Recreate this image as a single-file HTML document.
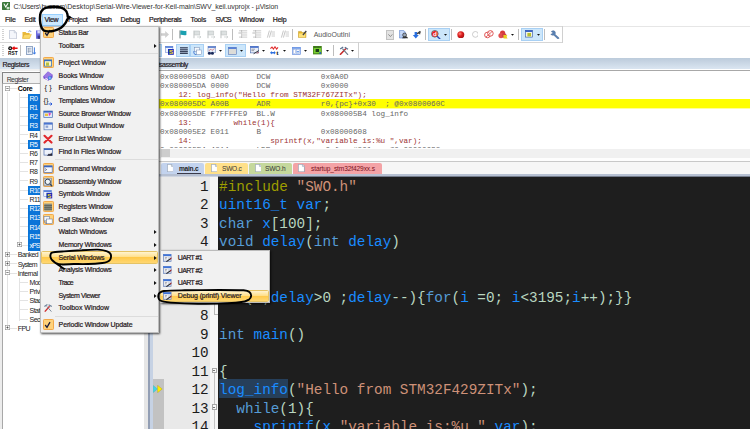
<!DOCTYPE html>
<html><head><meta charset="utf-8"><title>uVision</title>
<style>
html,body{margin:0;padding:0}
body{width:750px;height:429px;position:relative;overflow:hidden;background:#fff;font-family:'Liberation Sans',sans-serif;}
div,span,svg{position:absolute;}
span{white-space:nowrap;} span span{position:static;white-space:pre;}
</style></head><body>
<div style="left:0px;top:0px;width:750px;height:13px;background:#fff"></div>
<svg style="left:1.7px;top:2.2px" width="8.4" height="8.2" viewBox="0 0 9 10" preserveAspectRatio="none"><rect width="9" height="10" rx="1" fill="#3c7a3c"/><path d="M2 2 L4 6 L6.5 1.5" stroke="#fff" stroke-width="1.2" fill="none"/><rect x="5" y="6" width="3" height="3" fill="#cfe6cf"/></svg>
<span style="left:13.5px;top:3px;font-size:7px;line-height:7px;color:#333;letter-spacing:-0.208px;">C:\Users\</span>
<span style="left:41.4px;top:3px;font-size:7px;line-height:7px;color:#333;letter-spacing:-0.185px;">bussam</span>
<span style="left:65.2px;top:3px;font-size:7px;line-height:7px;color:#333;letter-spacing:0.070px;">\Desktop\</span>
<span style="left:95.6px;top:3px;font-size:7px;line-height:7px;color:#333;letter-spacing:-0.061px;">Serial-Wire-Viewer-for-Keil-main\SWV_keil.uvprojx - µVision</span>
<div style="left:0px;top:13px;width:750px;height:13px;background:#fff"></div>
<div style="left:42px;top:14px;width:21px;height:11.5px;background:#cce8ff;border:0.5px solid #99d1ff;box-sizing:border-box"></div>
<span style="left:5px;top:16px;font-size:7px;line-height:7px;color:#1c1418;-webkit-text-stroke:0.2px #1c1418;letter-spacing:-0.170px;">File</span>
<span style="left:24.4px;top:16px;font-size:7px;line-height:7px;color:#1c1418;-webkit-text-stroke:0.2px #1c1418;letter-spacing:-0.216px;">Edit</span>
<span style="left:44.4px;top:16px;font-size:7px;line-height:7px;color:#1c1418;-webkit-text-stroke:0.2px #1c1418;letter-spacing:-0.262px;">View</span>
<span style="left:68px;top:16px;font-size:7px;line-height:7px;color:#1c1418;-webkit-text-stroke:0.2px #1c1418;letter-spacing:-0.369px;">Project</span>
<span style="left:96.4px;top:16px;font-size:7px;line-height:7px;color:#1c1418;-webkit-text-stroke:0.2px #1c1418;letter-spacing:-0.383px;">Flash</span>
<span style="left:120.6px;top:16px;font-size:7px;line-height:7px;color:#1c1418;-webkit-text-stroke:0.2px #1c1418;letter-spacing:-0.246px;">Debug</span>
<span style="left:149px;top:16px;font-size:7px;line-height:7px;color:#1c1418;-webkit-text-stroke:0.2px #1c1418;letter-spacing:-0.255px;">Peripherals</span>
<span style="left:190.6px;top:16px;font-size:7px;line-height:7px;color:#1c1418;-webkit-text-stroke:0.2px #1c1418;letter-spacing:-0.188px;">Tools</span>
<span style="left:215.6px;top:16px;font-size:7px;line-height:7px;color:#1c1418;-webkit-text-stroke:0.2px #1c1418;letter-spacing:-1.016px;">SVCS</span>
<span style="left:239px;top:16px;font-size:7px;line-height:7px;color:#1c1418;-webkit-text-stroke:0.2px #1c1418;letter-spacing:0.017px;">Window</span>
<span style="left:272.8px;top:16px;font-size:7px;line-height:7px;color:#1c1418;-webkit-text-stroke:0.2px #1c1418;letter-spacing:-0.199px;">Help</span>
<div style="left:0px;top:26px;width:750px;height:32.4px;background:#fff"></div>
<div style="left:0px;top:26.2px;width:750px;height:0.8px;background:#e6e6e6"></div>
<div style="left:0px;top:26.2px;width:562.6px;height:0.8px;background:#dadada"></div>
<div style="left:0px;top:41.8px;width:562.6px;height:0.8px;background:#d6d6d6"></div>
<div style="left:562px;top:26.2px;width:0.8px;height:16.4px;background:#d0d0d0"></div>
<div style="left:358.2px;top:42px;width:0.8px;height:16px;background:#d0d0d0"></div>
<div style="left:2.4px;top:29px;width:1.2px;height:0.8px;background:#d2d2d2"></div>
<div style="left:2.4px;top:31px;width:1.2px;height:0.8px;background:#d2d2d2"></div>
<div style="left:2.4px;top:33px;width:1.2px;height:0.8px;background:#d2d2d2"></div>
<div style="left:2.4px;top:35px;width:1.2px;height:0.8px;background:#d2d2d2"></div>
<div style="left:2.4px;top:37px;width:1.2px;height:0.8px;background:#d2d2d2"></div>
<div style="left:2.4px;top:39px;width:1.2px;height:0.8px;background:#d2d2d2"></div>
<div style="left:2.4px;top:44.8px;width:1.2px;height:0.8px;background:#d2d2d2"></div>
<div style="left:2.4px;top:46.8px;width:1.2px;height:0.8px;background:#d2d2d2"></div>
<div style="left:2.4px;top:48.8px;width:1.2px;height:0.8px;background:#d2d2d2"></div>
<div style="left:2.4px;top:50.8px;width:1.2px;height:0.8px;background:#d2d2d2"></div>
<div style="left:2.4px;top:52.8px;width:1.2px;height:0.8px;background:#d2d2d2"></div>
<div style="left:2.4px;top:54.8px;width:1.2px;height:0.8px;background:#d2d2d2"></div>
<svg style="left:9px;top:29.8px" width="8" height="9.2" viewBox="0 0 8 9.2"><path d="M0.4 0.4 H5.2 L7.6 2.8 V8.8 H0.4 Z" fill="#f4f6fb" stroke="#b4bccc" stroke-width="0.7"/><path d="M5.2 0.4 V2.8 H7.6" fill="#e2e6f0" stroke="#b4bccc" stroke-width="0.5"/></svg>
<svg style="left:21.8px;top:29.8px" width="10" height="9" viewBox="0 0 10 9"><path d="M0.5 2 H3.6 L4.4 3 H7.6 V8.4 H0.5 Z" fill="#e9b83a"/><path d="M0.5 8.4 L2.2 4.4 H9.4 L7.6 8.4 Z" fill="#fbd96a" stroke="#d9a520" stroke-width="0.4"/><path d="M6.4 1.8 C7.4 0.4 8.6 0.6 9 1.8" stroke="#4a78c8" stroke-width="0.8" fill="none"/></svg>
<svg style="left:36px;top:30px" width="5" height="9" viewBox="0 0 5 9"><rect x="0" y="0.4" width="5" height="8.4" fill="#6c6ce0"/><rect x="1.4" y="0.4" width="3.6" height="3" fill="#d8d8f8"/><rect x="1.6" y="5.6" width="3.4" height="3.2" fill="#3a3a8a"/></svg>
<svg style="left:161px;top:30.6px" width="8" height="7" viewBox="0 0 8 7"><path d="M0 2.2 H4.2 V0 L8 3.5 L4.2 7 V4.8 H0 Z" fill="#cfcfcf"/></svg>
<div style="left:172.2px;top:29px;width:0.8px;height:10.6px;background:#bdbdbd"></div>
<svg style="left:179px;top:30px" width="8" height="8.6" viewBox="0 0 8 8.6"><path d="M1 0.4 V8.4" stroke="#5a6a6a" stroke-width="0.9"/><path d="M1.4 0.8 C3 0 4.6 1.8 7.4 0.8 V5 C4.6 6 3 4.2 1.4 5 Z" fill="#1aa0b0"/></svg>
<svg style="left:193px;top:30px" width="8.4" height="8.6" viewBox="0 0 8.4 8.6"><path d="M1 0.6 V8.2" stroke="#b8bcbc" stroke-width="0.9"/><path d="M1.4 1 H6.6 V5 H1.4 Z" fill="#dde1e1" stroke="#b4baba" stroke-width="0.5"/><path d="M4 7 H8 M6.4 5.8 L8 7 L6.4 8.2" stroke="#c4c8c8" stroke-width="0.7" fill="none"/></svg>
<svg style="left:206.6px;top:30px" width="8.4" height="8.6" viewBox="0 0 8.4 8.6"><path d="M1 0.6 V8.2" stroke="#b8bcbc" stroke-width="0.9"/><path d="M1.4 1 H6.6 V5 H1.4 Z" fill="#dde1e1" stroke="#b4baba" stroke-width="0.5"/><path d="M4 7 H8 M6.4 5.8 L8 7 L6.4 8.2" stroke="#c4c8c8" stroke-width="0.7" fill="none"/></svg>
<svg style="left:220.4px;top:30px" width="8.4" height="8.6" viewBox="0 0 8.4 8.6"><path d="M1 0.6 V8.2" stroke="#b8bcbc" stroke-width="0.9"/><path d="M1.4 1 H6.6 V5 H1.4 Z" fill="#dde1e1" stroke="#b4baba" stroke-width="0.5"/><path d="M4 7 H8 M6.4 5.8 L8 7 L6.4 8.2" stroke="#c4c8c8" stroke-width="0.7" fill="none"/></svg>
<div style="left:232.29999999999998px;top:29px;width:0.8px;height:10.6px;background:#bdbdbd"></div>
<svg style="left:238.4px;top:30.4px" width="9.4" height="8" viewBox="0 0 9.4 8"><path d="M1 0.8 H9.2 M4 2.9 H9.2 M4 5 H9.2 M1 7.1 H9.2 M3.6 0 V8" stroke="#a6a6a6" stroke-width="0.6"/><path d="M0.4 3 H3" stroke="#a6a6a6" stroke-width="0.8"/></svg>
<svg style="left:252.4px;top:30.4px" width="9.4" height="8" viewBox="0 0 9.4 8"><path d="M1 0.8 H9.2 M4 2.9 H9.2 M4 5 H9.2 M1 7.1 H9.2 M3.6 0 V8" stroke="#a6a6a6" stroke-width="0.6"/><path d="M0.4 3 H3" stroke="#a6a6a6" stroke-width="0.8"/></svg>
<svg style="left:266.4px;top:30.4px" width="9" height="8" viewBox="0 0 9 8"><path d="M1.4 7.6 L3.4 0.6 M3.4 7.6 L5.4 0.6" stroke="#b8b8b8" stroke-width="0.8"/><path d="M5.6 2 H9 M5.6 4 H9 M5.6 6 H9" stroke="#c2c2c2" stroke-width="0.8"/></svg>
<svg style="left:280.2px;top:30.4px" width="9" height="8" viewBox="0 0 9 8"><path d="M1.4 7.6 L3.4 0.6 M3.4 7.6 L5.4 0.6" stroke="#b8b8b8" stroke-width="0.8"/><path d="M5.6 2 H9 M5.6 4 H9 M5.6 6 H9" stroke="#c2c2c2" stroke-width="0.8"/></svg>
<div style="left:292.0px;top:29px;width:0.8px;height:10.6px;background:#bdbdbd"></div>
<svg style="left:298.2px;top:30.2px" width="9.2" height="8" viewBox="0 0 9.2 8"><path d="M0.4 1.4 H3.4 L4.2 2.4 H8 V7.6 H0.4 Z" fill="#e4b428" stroke="#b88a10" stroke-width="0.4"/><path d="M1 7.2 V3.4 H7.4 V7.2 Z" fill="#ffe27a"/><path d="M4.4 4.6 L7.8 0.6 L8.8 1.6 L5.4 5.4 Z" fill="#444"/></svg>
<span style="left:313.7px;top:31px;font-size:7px;line-height:7px;color:#555;letter-spacing:-0.025px;">AudioOutIni</span>
<div style="left:386.3px;top:30px;width:7.8px;height:10.3px;background:#e2e2e2;border:0.6px solid #c2c2c2;box-sizing:border-box"></div>
<svg style="left:387.8px;top:34px" width="4.8" height="3" viewBox="0 0 4.8 3"><path d="M0.3 0.4 L2.4 2.4 L4.5 0.4" stroke="#555" stroke-width="0.6" fill="none"/></svg>
<svg style="left:398.6px;top:30px" width="9.4" height="8.6" viewBox="0 0 9.4 8.6"><path d="M0.4 0.4 H4.6 L6.4 2.2 V8 H0.4 Z" fill="#b4ccf4" stroke="#5a82c8" stroke-width="0.6"/><path d="M1.4 2 H4 M1.4 3.6 H3.4" stroke="#eef4ff" stroke-width="0.6"/><circle cx="5.6" cy="5" r="1.9" fill="#9aa8bc" stroke="#333" stroke-width="0.7"/><path d="M3 8.2 H9.2 L7.8 6.4 H4.4 Z" fill="#333"/></svg>
<svg style="left:412px;top:30px" width="9.4" height="8.6" viewBox="0 0 9.4 8.6"><path d="M2.6 2 V5 H0.8 L3.8 8.4 L6.8 5 H5 V2 Z" fill="#2a6fe0"/><path d="M4.6 3.2 L8 0.8 L9.2 2.2 L8 3 L8.6 4 L7.6 4.6 L7 3.6 L5.4 4.6 Z" fill="#444"/></svg>
<div style="left:424.6px;top:29px;width:0.8px;height:10.6px;background:#bdbdbd"></div>
<div style="left:428px;top:27.8px;width:21.6px;height:12.8px;background:#cce6fa;border:0.6px solid #a8d0f4;box-sizing:border-box"></div>
<svg style="left:431px;top:29.6px" width="10" height="9.6" viewBox="0 0 10 9.6"><circle cx="3.8" cy="3.8" r="3.3" fill="#fff" stroke="#444" stroke-width="0.8"/><path d="M6.2 6.2 L9.2 9.2" stroke="#2a3fb0" stroke-width="1.4"/><circle cx="3.8" cy="3.8" r="2.9" fill="#e81c1c"/><text x="2" y="6" font-size="6.2" font-family="Liberation Sans, sans-serif" font-weight="bold" fill="#fff">d</text></svg>
<svg style="left:443.8px;top:33.5px" width="3" height="2" viewBox="0 0 3 2"><path d="M0 0 H3 L1.5 1.8 Z" fill="#111"/></svg>
<div style="left:450.6px;top:29px;width:0.8px;height:10.6px;background:#bdbdbd"></div>
<svg style="left:457.2px;top:30.6px" width="7.8" height="7.6" viewBox="0 0 7.8 7.6"><defs><radialGradient id="rb" cx="0.38" cy="0.35" r="0.7"><stop offset="0" stop-color="#ff8a80"/><stop offset="0.45" stop-color="#e02020"/><stop offset="1" stop-color="#a01010"/></radialGradient></defs><circle cx="3.8" cy="3.8" r="3.5" fill="url(#rb)"/></svg>
<svg style="left:471.6px;top:31px" width="6.8" height="6.8" viewBox="0 0 6.8 6.8"><circle cx="3.4" cy="3.4" r="2.9" fill="#fff" stroke="#b8b8b8" stroke-width="0.7"/></svg>
<svg style="left:484px;top:30.2px" width="10" height="8.4" viewBox="0 0 10 8.4"><circle cx="3.4" cy="5" r="2.8" fill="#fff" stroke="#d83030" stroke-width="0.8"/><circle cx="6.4" cy="3.4" r="2.8" fill="#fff" fill-opacity="0.6" stroke="#d83030" stroke-width="0.8"/><path d="M2 7 L8 1.6" stroke="#d83030" stroke-width="0.7"/></svg>
<svg style="left:498.4px;top:30px" width="10" height="8.8" viewBox="0 0 10 8.8"><circle cx="4.6" cy="3" r="2.6" fill="#d83a3a"/><circle cx="3" cy="5.6" r="2.6" fill="#e05050"/><circle cx="6.2" cy="5.6" r="2.4" fill="#d04040"/><path d="M5.4 5 L9.4 5 L8.4 6.6 L9.6 8.4 L5.6 8.4 Z" fill="#e8d020"/></svg>
<svg style="left:511.2px;top:33.5px" width="3" height="2" viewBox="0 0 3 2"><path d="M0 0 H3 L1.5 1.8 Z" fill="#111"/></svg>
<div style="left:517.6px;top:29px;width:0.8px;height:10.6px;background:#bdbdbd"></div>
<div style="left:521px;top:27.8px;width:22px;height:12.8px;background:#cce6fa;border:0.6px solid #a8d0f4;box-sizing:border-box"></div>
<svg style="left:525px;top:30.4px" width="7.8" height="7.4" viewBox="0 0 7.8 7.4"><rect x="0.3" y="0.3" width="7.2" height="6.8" fill="#f4f4e0" stroke="#2a4fa8" stroke-width="0.6"/><rect x="0.3" y="0.3" width="7.2" height="1.6" fill="#2a56c0"/><rect x="2.4" y="3" width="3.6" height="3.4" fill="#b8c030"/></svg>
<svg style="left:537.2px;top:33.5px" width="3" height="2" viewBox="0 0 3 2"><path d="M0 0 H3 L1.5 1.8 Z" fill="#111"/></svg>
<div style="left:544.4px;top:29px;width:0.8px;height:10.6px;background:#bdbdbd"></div>
<svg style="left:549.8px;top:29.8px" width="10" height="9.4" viewBox="0 0 10 9.4"><path d="M1.2 1.6 C2.4 0.2 4.6 0.4 5.2 2 C5.6 3 5.4 3.6 5 4.2 L9.2 8 L8 9.2 L3.8 5.2 C2.6 5.6 1.4 5.2 0.8 4.2 L2.6 3.6 L2.8 2.6 Z" fill="#5a82b4" stroke="#3a5a8a" stroke-width="0.4"/></svg>
<svg style="left:7.6px;top:45.6px" width="10" height="9.4" viewBox="0 0 10 9.4"><circle cx="2.2" cy="2.2" r="2" fill="#111"/><circle cx="2.2" cy="2.2" r="0.7" fill="#fff"/><path d="M4.6 2.2 H9.6 M6.6 0.8 L4.6 2.2 L6.6 3.6" stroke="#e81010" stroke-width="1.4" fill="none"/><text x="0" y="9.3" font-size="5.8" font-weight="bold" font-family="Liberation Sans, sans-serif" fill="#111" textLength="9.6" lengthAdjust="spacingAndGlyphs">RST</text></svg>
<div style="left:20.200000000000003px;top:45px;width:0.8px;height:10.6px;background:#bdbdbd"></div>
<svg style="left:26px;top:45.8px" width="10" height="9.2" viewBox="0 0 10 9.2"><rect x="0.4" y="0.4" width="6.2" height="8.2" fill="#e8eef8" stroke="#6a86b0" stroke-width="0.7"/><path d="M1.6 2.4 H5.4 M1.6 4 H5.4 M1.6 5.6 H5.4 M2.6 2 V7" stroke="#7a8aa0" stroke-width="0.5"/><path d="M8.4 1.4 V8 M7 6.4 L8.4 8.2 L9.8 6.4" stroke="#2a6fe0" stroke-width="0.9" fill="none"/></svg>
<div style="left:150px;top:43.7px;width:12.4px;height:13px;background:#cce6fa;border:0.6px solid #a8d0f4;box-sizing:border-box"></div>
<svg style="left:165.2px;top:46.4px" width="9" height="9" viewBox="0 0 9 9"><rect x="0.3" y="0.3" width="7.6" height="6.4" fill="#f2f5fb" stroke="#5a7ac8" stroke-width="0.5"/><rect x="0.3" y="0.3" width="7.6" height="1.5" fill="#4a78d8"/><rect x="3" y="3" width="5.8" height="5.8" fill="#1c2cb8"/><text x="3.9" y="8.4" font-size="6.2" font-weight="bold" font-family="Liberation Sans, sans-serif" fill="#f4e020">S</text></svg>
<div style="left:176.3px;top:43.7px;width:13.8px;height:13px;background:#cce6fa;border:0.6px solid #a8d0f4;box-sizing:border-box"></div>
<svg style="left:180px;top:47px" width="7.8" height="7.4" viewBox="0 0 7.8 7.4"><rect x="0" y="0" width="7.8" height="7.4" fill="#a8b8d0"/><path d="M0 0.8 H7.8 M0 2.7 H7.8 M0 4.6 H7.8 M0 6.5 H7.8" stroke="#36425a" stroke-width="1.1"/></svg>
<div style="left:190.1px;top:43.7px;width:13.7px;height:13px;background:#cce6fa;border:0.6px solid #a8d0f4;box-sizing:border-box"></div>
<svg style="left:193px;top:46.6px" width="9" height="8.6" viewBox="0 0 9 8.6"><rect x="1.6" y="0.4" width="5" height="4" fill="#f6f8fc" stroke="#7088b0" stroke-width="0.5"/><rect x="3.6" y="3" width="5" height="4.4" fill="#fff" stroke="#7088b0" stroke-width="0.5"/><path d="M1 4 C0.4 6.4 1.4 7.8 3.4 7.6" stroke="#3a70d0" stroke-width="0.9" fill="none"/></svg>
<svg style="left:206.6px;top:46.2px" width="9.4" height="9" viewBox="0 0 9.4 9"><rect x="1" y="0.4" width="7.8" height="6" fill="#e8eef8" stroke="#5a78b0" stroke-width="0.5"/><rect x="1" y="0.4" width="7.8" height="1.4" fill="#4a70c8"/><path d="M2 5 L3.6 3 L5 4.4 L7.6 2.6" stroke="#c03030" stroke-width="0.5" fill="none"/><circle cx="2.4" cy="7.2" r="1.5" fill="#1a2a5a"/><circle cx="5.4" cy="7.2" r="1.5" fill="#1a2a5a"/></svg>
<svg style="left:219px;top:49.5px" width="3" height="2" viewBox="0 0 3 2"><path d="M0 0 H3 L1.5 1.8 Z" fill="#111"/></svg>
<div style="left:225px;top:43.7px;width:21.4px;height:13px;background:#cce6fa;border:0.6px solid #a8d0f4;box-sizing:border-box"></div>
<svg style="left:228.2px;top:46.8px" width="8.6" height="7.8" viewBox="0 0 8.6 7.8"><rect x="0.3" y="0.3" width="8" height="7.2" fill="#dcdcd8" stroke="#5a78b8" stroke-width="0.6"/><rect x="0.3" y="0.3" width="8" height="1.6" fill="#4a78d8"/></svg>
<svg style="left:240.4px;top:49.5px" width="3" height="2" viewBox="0 0 3 2"><path d="M0 0 H3 L1.5 1.8 Z" fill="#111"/></svg>
<svg style="left:249.6px;top:46.4px" width="9" height="8.6" viewBox="0 0 9 8.6"><rect x="0.3" y="0.3" width="8" height="6.6" fill="#e8eef8" stroke="#4a6ab0" stroke-width="0.6"/><rect x="0.3" y="0.3" width="8" height="1.5" fill="#3a66c8"/><path d="M1.4 3.2 H5 M1.4 4.6 H4" stroke="#556" stroke-width="0.5"/><path d="M3.6 7.8 L8.8 4.6" stroke="#333" stroke-width="1"/><path d="M6.6 7.2 L8.8 6.6" stroke="#c03030" stroke-width="0.7"/></svg>
<svg style="left:262px;top:49.5px" width="3" height="2" viewBox="0 0 3 2"><path d="M0 0 H3 L1.5 1.8 Z" fill="#111"/></svg>
<svg style="left:270px;top:46px" width="10.4" height="9.2" viewBox="0 0 10.4 9.2"><path d="M0.4 2.6 L2 1 L3.4 3 L5 0.8 L6.6 3 L8 1.4" stroke="#e02828" stroke-width="1.1" fill="none"/><path d="M0 6.8 L1.8 5 V6 H4 V5 L5.8 6.8 L4 8.6 V7.6 H1.8 V8.6 Z" fill="#2a6fe0"/><text x="6.2" y="9" font-size="7" font-weight="bold" font-family="Liberation Serif, serif" fill="#111">t</text></svg>
<svg style="left:283px;top:49.5px" width="3" height="2" viewBox="0 0 3 2"><path d="M0 0 H3 L1.5 1.8 Z" fill="#111"/></svg>
<svg style="left:292px;top:46.6px" width="9" height="8" viewBox="0 0 9 8"><rect x="0.3" y="0.3" width="8.2" height="7.2" fill="#c9daf8" stroke="#5a86dc" stroke-width="0.6"/><rect x="0.3" y="0.3" width="8.2" height="1.4" fill="#6a96e6"/><rect x="1.3" y="2.6" width="2.2" height="4" fill="#fff" stroke="#7090c8" stroke-width="0.3"/><rect x="4.4" y="2.6" width="3.2" height="4" fill="#f4f8ff" stroke="#7090c8" stroke-width="0.3"/><path d="M4.8 4.8 H7" stroke="#2a6fe0" stroke-width="0.9"/></svg>
<svg style="left:304.3px;top:49.5px" width="3" height="2" viewBox="0 0 3 2"><path d="M0 0 H3 L1.5 1.8 Z" fill="#111"/></svg>
<svg style="left:313.2px;top:46.4px" width="9" height="8.6" viewBox="0 0 9 8.6"><rect x="0" y="0" width="8.8" height="8.4" fill="#4a8a20"/><rect x="0.8" y="2" width="7.2" height="5.2" fill="#7ad030"/><rect x="2.6" y="3" width="3.4" height="3" fill="#1a3a1a"/><path d="M1 1 H8" stroke="#1a3a1a" stroke-width="0.7" stroke-dasharray="0.8 0.6"/><circle cx="7.2" cy="7" r="0.9" fill="#2050d0"/></svg>
<svg style="left:325.8px;top:49.5px" width="3" height="2" viewBox="0 0 3 2"><path d="M0 0 H3 L1.5 1.8 Z" fill="#111"/></svg>
<div style="left:332.6px;top:45px;width:0.8px;height:10.6px;background:#bdbdbd"></div>
<svg style="left:338.6px;top:46px" width="10" height="9.4" viewBox="0 0 10 9.4"><path d="M1 8.8 L7 2.4" stroke="#c82828" stroke-width="1.5"/><path d="M9 8.8 L3.4 2.6" stroke="#6a7a8a" stroke-width="1.2"/><path d="M1.2 3 L4.2 1 M5.8 1.2 L9 3.2" stroke="#5a7090" stroke-width="1.3"/></svg>
<svg style="left:351.4px;top:49.5px" width="3" height="2" viewBox="0 0 3 2"><path d="M0 0 H3 L1.5 1.8 Z" fill="#111"/></svg>
<div style="left:0px;top:58.4px;width:750px;height:11px;background:linear-gradient(#bccbdb,#dae5f1)"></div>
<div style="left:0px;top:69.4px;width:148px;height:2px;background:#f0f0f0"></div>
<div style="left:152.7px;top:69.8px;width:597.3px;height:1.6px;background:#a8a8a8"></div>
<span style="left:2.4px;top:61px;font-size:7px;line-height:7px;color:#1c1418;-webkit-text-stroke:0.18px #1c1418;letter-spacing:-0.307px;">Registers</span>
<span style="left:153.4px;top:61px;font-size:7px;line-height:7px;color:#1c1418;-webkit-text-stroke:0.18px #1c1418;letter-spacing:-0.480px;">Disassembly</span>
<div style="left:0px;top:71.4px;width:146px;height:358px;background:#fff"></div>
<div style="left:0px;top:71.4px;width:2px;height:358px;background:#ececec"></div>
<div style="left:2px;top:83px;width:1px;height:346px;background:#a8a8a8"></div>
<div style="left:144.4px;top:71.4px;width:3.6px;height:358px;background:#e6e6e6"></div>
<div style="left:148px;top:58.4px;width:2px;height:371px;background:#929eb4"></div>
<div style="left:150px;top:58.4px;width:2.6px;height:371px;background:#c6d2e4"></div>
<div style="left:2px;top:72.2px;width:142.6px;height:11.5px;background:#f0f0f0;border:0.8px solid #b0b0b0;border-top-color:#858585;border-left-color:#858585;box-sizing:border-box"></div>
<span style="left:6.7px;top:76px;font-size:6.8px;line-height:7px;color:#333;letter-spacing:-0.478px;">Register</span>
<div style="left:7px;top:92.4px;width:1px;height:236.59px;background:#e3e3e3"></div>
<div style="left:19px;top:93.4px;width:1px;height:148.44px;background:#e3e3e3"></div>
<div style="left:19px;top:277.70000000000005px;width:1px;height:43.075px;background:#e3e3e3"></div>
<div style="left:10px;top:88px;width:7px;height:1px;background:#e3e3e3"></div>
<svg style="left:5.1px;top:85.70px" width="5" height="5" viewBox="0 0 4.8 4.8"><rect x="0.3" y="0.3" width="4.2" height="4.2" fill="#fff" stroke="#929292" stroke-width="0.6"/><path d="M1.3 2.4 H3.5" stroke="#3a3a3a" stroke-width="0.6"/></svg>
<span style="left:17.8px;top:85px;font-size:7px;line-height:7px;color:#000;font-weight:bold;letter-spacing:-0.337px;">Core</span>
<div style="left:20px;top:97px;width:8px;height:1px;background:#e3e3e3"></div>
<div style="left:27.5px;top:94px;width:40px;height:9px;background:#0a74d8"></div>
<span style="left:29.6px;top:95px;font-size:7px;line-height:7px;color:#fff;letter-spacing:-0.761px;">R0</span>
<div style="left:20px;top:107px;width:8px;height:1px;background:#e3e3e3"></div>
<div style="left:27.5px;top:103px;width:40px;height:9px;background:#0a74d8"></div>
<span style="left:29.6px;top:104px;font-size:7px;line-height:7px;color:#fff;letter-spacing:-0.761px;">R1</span>
<div style="left:20px;top:116px;width:8px;height:1px;background:#e3e3e3"></div>
<div style="left:27.5px;top:112px;width:40px;height:10px;background:#0a74d8"></div>
<span style="left:29.6px;top:113px;font-size:7px;line-height:7px;color:#fff;letter-spacing:-0.761px;">R2</span>
<div style="left:20px;top:125px;width:8px;height:1px;background:#e3e3e3"></div>
<div style="left:27.5px;top:122px;width:40px;height:9px;background:#0a74d8"></div>
<span style="left:29.6px;top:122px;font-size:7px;line-height:7px;color:#fff;letter-spacing:-0.761px;">R3</span>
<div style="left:20px;top:134px;width:8px;height:1px;background:#e3e3e3"></div>
<span style="left:29.6px;top:132px;font-size:7px;line-height:7px;color:#222;letter-spacing:-0.761px;">R4</span>
<div style="left:20px;top:143px;width:8px;height:1px;background:#e3e3e3"></div>
<div style="left:27.5px;top:140px;width:40px;height:9px;background:#0a74d8"></div>
<span style="left:29.6px;top:141px;font-size:7px;line-height:7px;color:#fff;letter-spacing:-0.761px;">R5</span>
<div style="left:20px;top:153px;width:8px;height:1px;background:#e3e3e3"></div>
<span style="left:29.6px;top:150px;font-size:7px;line-height:7px;color:#222;letter-spacing:-0.761px;">R6</span>
<div style="left:20px;top:162px;width:8px;height:1px;background:#e3e3e3"></div>
<span style="left:29.6px;top:159px;font-size:7px;line-height:7px;color:#222;letter-spacing:-0.761px;">R7</span>
<div style="left:20px;top:171px;width:8px;height:1px;background:#e3e3e3"></div>
<span style="left:29.6px;top:168px;font-size:7px;line-height:7px;color:#222;letter-spacing:-0.761px;">R8</span>
<div style="left:20px;top:180px;width:8px;height:1px;background:#e3e3e3"></div>
<span style="left:29.6px;top:178px;font-size:7px;line-height:7px;color:#222;letter-spacing:-0.761px;">R9</span>
<div style="left:20px;top:190px;width:8px;height:1px;background:#e3e3e3"></div>
<div style="left:27.5px;top:186px;width:40px;height:9px;background:#0a74d8"></div>
<span style="left:29.6px;top:187px;font-size:7px;line-height:7px;color:#fff;letter-spacing:-0.728px;">R10</span>
<div style="left:20px;top:199px;width:8px;height:1px;background:#e3e3e3"></div>
<span style="left:29.6px;top:196px;font-size:7px;line-height:7px;color:#222;letter-spacing:-0.698px;">R11</span>
<div style="left:20px;top:208px;width:8px;height:1px;background:#e3e3e3"></div>
<div style="left:27.5px;top:205px;width:40px;height:9px;background:#0a74d8"></div>
<span style="left:29.6px;top:205px;font-size:7px;line-height:7px;color:#fff;letter-spacing:-0.728px;">R12</span>
<div style="left:20px;top:217px;width:8px;height:1px;background:#e3e3e3"></div>
<div style="left:27.5px;top:214px;width:40px;height:9px;background:#0a74d8"></div>
<span style="left:29.6px;top:214px;font-size:7px;line-height:7px;color:#fff;letter-spacing:-0.728px;">R13</span>
<div style="left:20px;top:226px;width:8px;height:1px;background:#e3e3e3"></div>
<div style="left:27.5px;top:223px;width:40px;height:9px;background:#0a74d8"></div>
<span style="left:29.6px;top:224px;font-size:7px;line-height:7px;color:#fff;letter-spacing:-0.728px;">R14</span>
<div style="left:20px;top:236px;width:8px;height:1px;background:#e3e3e3"></div>
<div style="left:27.5px;top:232px;width:40px;height:10px;background:#0a74d8"></div>
<span style="left:29.6px;top:233px;font-size:7px;line-height:7px;color:#fff;letter-spacing:-0.728px;">R15</span>
<div style="left:21px;top:245px;width:7px;height:1px;background:#e3e3e3"></div>
<svg style="left:16.6px;top:242.36px" width="5" height="5" viewBox="0 0 4.8 4.8"><rect x="0.3" y="0.3" width="4.2" height="4.2" fill="#fff" stroke="#929292" stroke-width="0.6"/><path d="M1.3 2.4 H3.5" stroke="#3a3a3a" stroke-width="0.6"/><path d="M2.4 1.3 V3.5" stroke="#3a3a3a" stroke-width="0.6"/></svg>
<div style="left:27.5px;top:242px;width:40px;height:9px;background:#0a74d8"></div>
<span style="left:29.6px;top:242px;font-size:7px;line-height:7px;color:#fff;letter-spacing:-0.973px;">xPSR</span>
<div style="left:10px;top:254px;width:7px;height:1px;background:#e3e3e3"></div>
<svg style="left:5.1px;top:251.57px" width="5" height="5" viewBox="0 0 4.8 4.8"><rect x="0.3" y="0.3" width="4.2" height="4.2" fill="#fff" stroke="#929292" stroke-width="0.6"/><path d="M1.3 2.4 H3.5" stroke="#3a3a3a" stroke-width="0.6"/><path d="M2.4 1.3 V3.5" stroke="#3a3a3a" stroke-width="0.6"/></svg>
<span style="left:17.8px;top:251px;font-size:7px;line-height:7px;color:#222;letter-spacing:-0.557px;">Banked</span>
<div style="left:10px;top:263px;width:7px;height:1px;background:#e3e3e3"></div>
<svg style="left:5.1px;top:260.79px" width="5" height="5" viewBox="0 0 4.8 4.8"><rect x="0.3" y="0.3" width="4.2" height="4.2" fill="#fff" stroke="#929292" stroke-width="0.6"/><path d="M1.3 2.4 H3.5" stroke="#3a3a3a" stroke-width="0.6"/><path d="M2.4 1.3 V3.5" stroke="#3a3a3a" stroke-width="0.6"/></svg>
<span style="left:17.8px;top:261px;font-size:7px;line-height:7px;color:#222;letter-spacing:-0.723px;">System</span>
<div style="left:10px;top:273px;width:7px;height:1px;background:#e3e3e3"></div>
<svg style="left:5.1px;top:270.00px" width="5" height="5" viewBox="0 0 4.8 4.8"><rect x="0.3" y="0.3" width="4.2" height="4.2" fill="#fff" stroke="#929292" stroke-width="0.6"/><path d="M1.3 2.4 H3.5" stroke="#3a3a3a" stroke-width="0.6"/></svg>
<span style="left:17.8px;top:270px;font-size:7px;line-height:7px;color:#222;letter-spacing:-0.444px;">Internal</span>
<div style="left:20px;top:282px;width:8px;height:1px;background:#e3e3e3"></div>
<span style="left:29.6px;top:279px;font-size:7px;line-height:7px;color:#222;letter-spacing:-0.744px;">Mode</span>
<div style="left:20px;top:291px;width:8px;height:1px;background:#e3e3e3"></div>
<span style="left:29.6px;top:288px;font-size:7px;line-height:7px;color:#222;letter-spacing:-0.507px;">Privilege</span>
<div style="left:20px;top:300px;width:8px;height:1px;background:#e3e3e3"></div>
<span style="left:29.6px;top:297px;font-size:7px;line-height:7px;color:#222;letter-spacing:-0.595px;">Stack</span>
<div style="left:20px;top:309px;width:8px;height:1px;background:#e3e3e3"></div>
<span style="left:29.6px;top:307px;font-size:7px;line-height:7px;color:#222;letter-spacing:-0.562px;">States</span>
<div style="left:20px;top:319px;width:8px;height:1px;background:#e3e3e3"></div>
<span style="left:29.6px;top:316px;font-size:7px;line-height:7px;color:#222;letter-spacing:-0.628px;">Secure</span>
<div style="left:10px;top:328px;width:7px;height:1px;background:#e3e3e3"></div>
<svg style="left:5.1px;top:325.29px" width="5" height="5" viewBox="0 0 4.8 4.8"><rect x="0.3" y="0.3" width="4.2" height="4.2" fill="#fff" stroke="#929292" stroke-width="0.6"/><path d="M1.3 2.4 H3.5" stroke="#3a3a3a" stroke-width="0.6"/><path d="M2.4 1.3 V3.5" stroke="#3a3a3a" stroke-width="0.6"/></svg>
<span style="left:17.8px;top:325px;font-size:7px;line-height:7px;color:#222;letter-spacing:-0.667px;">FPU</span>
<div style="left:152.7px;top:71.4px;width:597.3px;height:77.6px;background:#fff"></div>
<div style="left:153px;top:99px;width:597px;height:9px;background:#ffff00"></div>
<div style="left:153px;top:108px;width:597px;height:1px;background:#ffff9a"></div>
<div style="left:153px;top:71px;width:597px;height:77px;overflow:hidden">
<span style="left:7px;top:2px;font-size:7.67px;line-height:8px;color:#666;font-family:'Liberation Mono',monospace;white-space:pre;">0x080005D8 0A0D      DCW           0x0A0D</span>
<span style="left:7px;top:11px;font-size:7.67px;line-height:8px;color:#666;font-family:'Liberation Mono',monospace;white-space:pre;">0x080005DA 0000      DCW           0x0000</span>
<span style="left:7px;top:20px;font-size:7.67px;line-height:8px;color:#9c3434;font-family:'Liberation Mono',monospace;white-space:pre;">    12: log_info(&quot;Hello from STM32F767ZITx&quot;);</span>
<span style="left:7px;top:29px;font-size:7.67px;line-height:8px;color:#666;font-family:'Liberation Mono',monospace;white-space:pre;">0x080005DC A00B      ADR           r0,{pc}+0x30  ; @0x0800060C</span>
<span style="left:7px;top:39px;font-size:7.67px;line-height:8px;color:#666;font-family:'Liberation Mono',monospace;white-space:pre;">0x080005DE F7FFFFE9  BL.W          0x080005B4 log_info</span>
<span style="left:7px;top:48px;font-size:7.67px;line-height:8px;color:#9c3434;font-family:'Liberation Mono',monospace;white-space:pre;">    13:         while(1){</span>
<span style="left:7px;top:57px;font-size:7.67px;line-height:8px;color:#666;font-family:'Liberation Mono',monospace;white-space:pre;">0x080005E2 E011      B             0x08000608</span>
<span style="left:7px;top:66px;font-size:7.67px;line-height:8px;color:#9c3434;font-family:'Liberation Mono',monospace;white-space:pre;">    14:                 sprintf(x,&quot;variable is:%u &quot;,var);</span>
<span style="left:7px;top:75px;font-size:7.67px;line-height:8px;color:#666;font-family:'Liberation Mono',monospace;white-space:pre;">0x080005E4 4814      LDR           r0,[pc,#80]  ; @0x08000638</span>
</div>
<div style="left:152.7px;top:148.6px;width:597.3px;height:9.4px;background:#f0f0f0"></div>
<div style="left:161px;top:149.3px;width:9.3px;height:8px;background:#cdcdcd"></div>
<div style="left:152.7px;top:158px;width:597.3px;height:3px;background:#fdfdfd"></div>
<div style="left:152.7px;top:161px;width:597.3px;height:1px;background:#c8c8c8"></div>
<div style="left:152.7px;top:162px;width:597.3px;height:15px;background:#f6f6f6"></div>
<div style="left:161px;top:163px;width:43.4px;height:11px;background:#c3d3ee;border-radius:2px 2px 0 0"></div>
<svg style="left:166.6px;top:164.2px" width="6.8" height="8.2" viewBox="0 0 8 9.6" preserveAspectRatio="none"><path d="M0.4 0.4 H5.4 L7.6 2.6 V9.2 H0.4 Z" fill="#fff" stroke="#7a8aa0" stroke-width="0.7"/><path d="M5.2 0.4 V2.8 H7.6" fill="#d8e0ea" stroke="#7a8aa0" stroke-width="0.5"/></svg>
<div style="left:205px;top:163px;width:43px;height:11px;background:#ffe089;border-radius:2px 2px 0 0"></div>
<svg style="left:210.6px;top:164.2px" width="6.8" height="8.2" viewBox="0 0 8 9.6" preserveAspectRatio="none"><path d="M0.4 0.4 H5.4 L7.6 2.6 V9.2 H0.4 Z" fill="#fff" stroke="#7a8aa0" stroke-width="0.7"/><path d="M5.2 0.4 V2.8 H7.6" fill="#d8e0ea" stroke="#7a8aa0" stroke-width="0.5"/></svg>
<div style="left:249px;top:163px;width:42.7px;height:11px;background:#c5d89c;border-radius:2px 2px 0 0"></div>
<svg style="left:254.6px;top:164.2px" width="6.8" height="8.2" viewBox="0 0 8 9.6" preserveAspectRatio="none"><path d="M0.4 0.4 H5.4 L7.6 2.6 V9.2 H0.4 Z" fill="#fff" stroke="#7a8aa0" stroke-width="0.7"/><path d="M5.2 0.4 V2.8 H7.6" fill="#d8e0ea" stroke="#7a8aa0" stroke-width="0.5"/></svg>
<div style="left:292.6px;top:163px;width:89.8px;height:11px;background:#f4a3a6;border-radius:2px 2px 0 0"></div>
<svg style="left:298.20000000000005px;top:164.2px" width="6.8" height="8.2" viewBox="0 0 8 9.6" preserveAspectRatio="none"><path d="M0.4 0.4 H5.4 L7.6 2.6 V9.2 H0.4 Z" fill="#fff" stroke="#7a8aa0" stroke-width="0.7"/><path d="M5.2 0.4 V2.8 H7.6" fill="#d8e0ea" stroke="#7a8aa0" stroke-width="0.5"/></svg>
<span style="left:179px;top:165px;font-size:6.6px;line-height:7px;color:#222;font-weight:bold;letter-spacing:-0.251px;">main.c</span>
<div style="left:177px;top:173px;width:24px;height:1px;background:#3a3a4a"></div>
<span style="left:222px;top:165px;font-size:6.6px;line-height:7px;color:#333;letter-spacing:-0.260px;">SWO.c</span>
<span style="left:265px;top:165px;font-size:6.6px;line-height:7px;color:#333;letter-spacing:-0.134px;">SWO.h</span>
<span style="left:311px;top:165px;font-size:6.6px;line-height:7px;color:#7a1020;letter-spacing:-0.114px;">startup_stm32f429xx.s</span>
<div style="left:152.7px;top:174px;width:597.3px;height:2px;background:#b6c0d2"></div>
<div style="left:152.7px;top:176px;width:65.3px;height:1px;background:#cfd5e0"></div>
<div style="left:218px;top:176px;width:532px;height:1px;background:#747c8c"></div>
<div style="left:152.7px;top:177.2px;width:57.5px;height:251.8px;background:#e9e9e9"></div>
<div style="left:210.2px;top:177.2px;width:7.8px;height:251.8px;background:#f6f6f6"></div>
<div style="left:218px;top:177.2px;width:532px;height:251.8px;background:#1e1e1e"></div>
<div style="left:153px;top:379.4px;width:11px;height:49.6px;background:#c2c2c2"></div>
<div style="left:219px;top:379.4px;width:68.8px;height:18.2px;background:#263f5a"></div>
<div style="left:153px;top:177px;width:597px;height:252px;overflow:hidden">
<span style="left:-4.30px;width:60px;text-align:right;top:2px;font-size:14.35px;line-height:16px;color:#1a1a1a;font-family:'Liberation Mono',monospace">1</span>
<span style="left:66.10px;top:2px;font-size:14.35px;line-height:16px;white-space:pre;font-family:'Liberation Mono',monospace"><span style="color:#9d9d00">#include</span><span style="color:#b9d6c0"> </span><span style="color:#ce9178">&quot;SWO.h&quot;</span></span>
<span style="left:-4.30px;width:60px;text-align:right;top:20px;font-size:14.35px;line-height:16px;color:#1a1a1a;font-family:'Liberation Mono',monospace">2</span>
<span style="left:66.10px;top:20px;font-size:14.35px;line-height:16px;white-space:pre;font-family:'Liberation Mono',monospace"><span style="color:#1a8cff">uint16_t var</span><span style="color:#b9d6c0">;</span></span>
<span style="left:-4.30px;width:60px;text-align:right;top:39px;font-size:14.35px;line-height:16px;color:#1a1a1a;font-family:'Liberation Mono',monospace">3</span>
<span style="left:66.10px;top:39px;font-size:14.35px;line-height:16px;white-space:pre;font-family:'Liberation Mono',monospace"><span style="color:#569cd6">char</span><span style="color:#b9d6c0"> </span><span style="color:#1a8cff">x</span><span style="color:#b9d6c0">[100];</span></span>
<span style="left:-4.30px;width:60px;text-align:right;top:57px;font-size:14.35px;line-height:16px;color:#1a1a1a;font-family:'Liberation Mono',monospace">4</span>
<span style="left:66.10px;top:57px;font-size:14.35px;line-height:16px;white-space:pre;font-family:'Liberation Mono',monospace"><span style="color:#569cd6">void</span><span style="color:#b9d6c0"> </span><span style="color:#1a8cff">delay</span><span style="color:#b9d6c0">(</span><span style="color:#569cd6">int</span><span style="color:#b9d6c0"> </span><span style="color:#1a8cff">delay</span><span style="color:#b9d6c0">)</span></span>
<span style="left:-4.30px;width:60px;text-align:right;top:76px;font-size:14.35px;line-height:16px;color:#1a1a1a;font-family:'Liberation Mono',monospace">5</span>
<span style="left:66.10px;top:76px;font-size:14.35px;line-height:16px;white-space:pre;font-family:'Liberation Mono',monospace"><span style="color:#b9d6c0">{</span></span>
<span style="left:-4.30px;width:60px;text-align:right;top:94px;font-size:14.35px;line-height:16px;color:#1a1a1a;font-family:'Liberation Mono',monospace">6</span>
<span style="left:66.10px;top:94px;font-size:14.35px;line-height:16px;white-space:pre;font-family:'Liberation Mono',monospace"></span>
<span style="left:-4.30px;width:60px;text-align:right;top:113px;font-size:14.35px;line-height:16px;color:#1a1a1a;font-family:'Liberation Mono',monospace">7</span>
<span style="left:66.10px;top:113px;font-size:14.35px;line-height:16px;white-space:pre;font-family:'Liberation Mono',monospace"><span style="color:#569cd6">for</span><span style="color:#b9d6c0">( ;</span><span style="color:#1a8cff">delay</span><span style="color:#b9d6c0">&gt;0 ;</span><span style="color:#1a8cff">delay</span><span style="color:#b9d6c0">--){</span><span style="color:#569cd6">for</span><span style="color:#b9d6c0">(</span><span style="color:#1a8cff">i</span><span style="color:#b9d6c0"> =0; </span><span style="color:#1a8cff">i</span><span style="color:#b9d6c0">&lt;3195;</span><span style="color:#1a8cff">i</span><span style="color:#b9d6c0">++);}}</span></span>
<span style="left:-4.30px;width:60px;text-align:right;top:131px;font-size:14.35px;line-height:16px;color:#1a1a1a;font-family:'Liberation Mono',monospace">8</span>
<span style="left:66.10px;top:131px;font-size:14.35px;line-height:16px;white-space:pre;font-family:'Liberation Mono',monospace"></span>
<span style="left:-4.30px;width:60px;text-align:right;top:150px;font-size:14.35px;line-height:16px;color:#1a1a1a;font-family:'Liberation Mono',monospace">9</span>
<span style="left:66.10px;top:150px;font-size:14.35px;line-height:16px;white-space:pre;font-family:'Liberation Mono',monospace"><span style="color:#569cd6">int</span><span style="color:#b9d6c0"> </span><span style="color:#1a8cff">main</span><span style="color:#b9d6c0">()</span></span>
<span style="left:-4.30px;width:60px;text-align:right;top:168px;font-size:14.35px;line-height:16px;color:#1a1a1a;font-family:'Liberation Mono',monospace">10</span>
<span style="left:66.10px;top:168px;font-size:14.35px;line-height:16px;white-space:pre;font-family:'Liberation Mono',monospace"></span>
<span style="left:-4.30px;width:60px;text-align:right;top:187px;font-size:14.35px;line-height:16px;color:#1a1a1a;font-family:'Liberation Mono',monospace">11</span>
<span style="left:66.10px;top:187px;font-size:14.35px;line-height:16px;white-space:pre;font-family:'Liberation Mono',monospace"><span style="color:#b9d6c0">{</span></span>
<span style="left:-4.30px;width:60px;text-align:right;top:205px;font-size:14.35px;line-height:16px;color:#1a1a1a;font-family:'Liberation Mono',monospace">12</span>
<span style="left:66.10px;top:205px;font-size:14.35px;line-height:16px;white-space:pre;font-family:'Liberation Mono',monospace"><span style="color:#1a8cff">log_info</span><span style="color:#b9d6c0">(</span><span style="color:#ce9178">&quot;Hello from STM32F429ZITx&quot;</span><span style="color:#b9d6c0">);</span></span>
<span style="left:-4.30px;width:60px;text-align:right;top:224px;font-size:14.35px;line-height:16px;color:#1a1a1a;font-family:'Liberation Mono',monospace">13</span>
<span style="left:66.10px;top:224px;font-size:14.35px;line-height:16px;white-space:pre;font-family:'Liberation Mono',monospace"><span style="color:#b9d6c0">  </span><span style="color:#569cd6">while</span><span style="color:#b9d6c0">(1){</span></span>
<span style="left:-4.30px;width:60px;text-align:right;top:242px;font-size:14.35px;line-height:16px;color:#1a1a1a;font-family:'Liberation Mono',monospace">14</span>
<span style="left:66.10px;top:242px;font-size:14.35px;line-height:16px;white-space:pre;font-family:'Liberation Mono',monospace"><span style="color:#b9d6c0">    </span><span style="color:#1a8cff">sprintf</span><span style="color:#b9d6c0">(</span><span style="color:#1a8cff">x</span><span style="color:#b9d6c0">,</span><span style="color:#ce9178">&quot;variable is:%u &quot;</span><span style="color:#b9d6c0">,</span><span style="color:#1a8cff">var</span><span style="color:#b9d6c0">);</span></span>
</div>
<div style="left:211.6px;top:367.50000000000006px;width:5.2px;height:5.2px;background:#fafafa;border:0.6px solid #a8a8a8;box-sizing:border-box"></div>
<div style="left:212.9px;top:369.80000000000007px;width:2.6px;height:0.6px;background:#777"></div>
<div style="left:213.9px;top:372.70000000000005px;width:0.6px;height:35.074px;background:#c4c4c4"></div>
<div style="left:211.6px;top:404.42px;width:5.2px;height:5.2px;background:#fafafa;border:0.6px solid #a8a8a8;box-sizing:border-box"></div>
<div style="left:212.9px;top:406.72px;width:2.6px;height:0.6px;background:#777"></div>
<div style="left:213.9px;top:409.62px;width:0.6px;height:26px;background:#c4c4c4"></div>
<div style="left:214px;top:300px;width:1px;height:15px;background:#b8b8b8"></div>
<div style="left:214px;top:314px;width:4px;height:1px;background:#b8b8b8"></div>
<svg style="left:153.2px;top:385.16px" width="10" height="8" viewBox="0 0 10 8"><path d="M0.3 0.5 L4.3 4 L0.3 7.5 Z" fill="#3fd6e8" stroke="#2aa" stroke-width="0.3"/><path d="M4.6 0.3 L9.2 4 L4.6 7.7 Z" fill="#ffee00" stroke="#998800" stroke-width="0.3"/></svg>
<div style="left:40.2px;top:26px;width:119.2px;height:306.6px;background:#f1f1f1;border:0.7px solid #bcbcbc;box-sizing:border-box;box-shadow:1.2px 1.2px 2px rgba(0,0,0,0.7)"></div>
<div style="left:55.4px;top:53px;width:102.4px;height:1px;background:#dcdcdc"></div>
<div style="left:55.4px;top:159px;width:102.4px;height:1px;background:#dcdcdc"></div>
<div style="left:55.4px;top:316px;width:102.4px;height:1px;background:#dcdcdc"></div>
<div style="left:42.5px;top:26.8px;width:11.4px;height:11.5px;background:#ffd27a;border:0.7px solid #f2a94a;border-radius:1.3px;box-sizing:border-box"></div>
<span style="left:58.6px;top:29px;font-size:7px;line-height:7px;color:#2a1c24;-webkit-text-stroke:0.22px #2a1c24;letter-spacing:-0.298px;">Status Bar</span>
<svg style="left:43.2px;top:27.70px" width="10" height="10" viewBox="0 0 10 10"><path d="M2.2 5 L4 7.3 L7 2.2" stroke="#1a1a3a" stroke-width="1.3" fill="none"/></svg>
<span style="left:58.6px;top:42px;font-size:7px;line-height:7px;color:#2a1c24;-webkit-text-stroke:0.22px #2a1c24;letter-spacing:-0.132px;">Toolbars</span>
<svg style="left:154px;top:43.50px" width="3" height="4" viewBox="0 0 3 4"><path d="M0 0 L2.6 2 L0 4 Z" fill="#111"/></svg>
<div style="left:42.5px;top:56.8px;width:11.4px;height:11.5px;background:#ffd27a;border:0.7px solid #f2a94a;border-radius:1.3px;box-sizing:border-box"></div>
<span style="left:58.6px;top:59px;font-size:7px;line-height:7px;color:#2a1c24;-webkit-text-stroke:0.22px #2a1c24;letter-spacing:-0.116px;">Project Window</span>
<svg style="left:43.2px;top:57.70px" width="10" height="10" viewBox="0 0 10 10"><rect x="1" y="1.5" width="8" height="7" fill="#3a6fc0"/><rect x="1.8" y="3.2" width="6.4" height="4.6" fill="#fff7c0"/><rect x="3" y="4.5" width="3" height="3.3" fill="#b8c040"/></svg>
<span style="left:58.6px;top:72px;font-size:7px;line-height:7px;color:#2a1c24;-webkit-text-stroke:0.22px #2a1c24;letter-spacing:-0.125px;">Books Window</span>
<svg style="left:43.2px;top:70.70px" width="10" height="10" viewBox="0 0 10 10"><path d="M0.4 5.2 L5 0.6 L9.6 3.8 L9.6 6.6 L5.4 9.8 L0.4 7.2 Z" fill="#7a4fd0"/><path d="M0.4 5.2 L5 0.6 L9.6 3.8 L5.2 7.6 Z" fill="#9a78e4"/><path d="M2.4 6.4 L5.2 8 L5.2 9.4 L2.4 7.8 Z" fill="#efe8ff"/><circle cx="6.8" cy="7" r="2" fill="#3a7be0"/><path d="M5.6 7 H8 M6.8 5.6 V8.4" stroke="#cfe0ff" stroke-width="0.5"/></svg>
<span style="left:58.6px;top:84px;font-size:7px;line-height:7px;color:#2a1c24;-webkit-text-stroke:0.22px #2a1c24;letter-spacing:-0.074px;">Functions Window</span>
<svg style="left:43.2px;top:82.70px" width="10" height="10" viewBox="0 0 10 10"><text x="1.6" y="7.3" font-size="7.5" font-family="Liberation Sans, sans-serif" fill="#222">{ }</text></svg>
<span style="left:58.6px;top:97px;font-size:7px;line-height:7px;color:#2a1c24;-webkit-text-stroke:0.22px #2a1c24;letter-spacing:-0.172px;">Templates Window</span>
<svg style="left:43.2px;top:95.70px" width="10" height="10" viewBox="0 0 10 10"><text x="0.4" y="7.3" font-size="7.5" font-family="Liberation Sans, sans-serif" fill="#222">{}</text><path d="M5.5 8 H9 M7.6 6.6 L9 8 L7.6 9.4" stroke="#2a5bd8" stroke-width="1" fill="none"/></svg>
<span style="left:58.6px;top:110px;font-size:7px;line-height:7px;color:#2a1c24;-webkit-text-stroke:0.22px #2a1c24;letter-spacing:-0.221px;">Source Browser Window</span>
<svg style="left:43.2px;top:108.70px" width="10" height="10" viewBox="0 0 10 10"><rect x="0.8" y="2" width="8.6" height="6.6" fill="#dfe8f6" stroke="#4a70b8" stroke-width="0.7"/><rect x="0.8" y="2" width="8.6" height="1.6" fill="#3a66c0"/><path d="M5.5 3.8 L8.4 4.6 L6 7.2 Z" fill="#e040c0"/><rect x="2" y="4.6" width="3" height="2.4" fill="#f0c040"/></svg>
<span style="left:58.6px;top:122px;font-size:7px;line-height:7px;color:#2a1c24;-webkit-text-stroke:0.22px #2a1c24;letter-spacing:0.002px;">Build Output Window</span>
<svg style="left:43.2px;top:120.70px" width="10" height="10" viewBox="0 0 10 10"><rect x="1" y="1.8" width="8.4" height="7" fill="#e6ecf8" stroke="#5878b8" stroke-width="0.7"/><rect x="1" y="1.8" width="8.4" height="1.8" fill="#4a74d0"/><rect x="2.6" y="4.6" width="2.6" height="2.2" fill="#8aa0d0"/></svg>
<span style="left:58.6px;top:135px;font-size:7px;line-height:7px;color:#2a1c24;-webkit-text-stroke:0.22px #2a1c24;letter-spacing:-0.155px;">Error List Window</span>
<svg style="left:43.2px;top:133.70px" width="10" height="10" viewBox="0 0 10 10"><path d="M1.5 1.8 L8.5 8.6 M8.5 1.8 L1.5 8.6" stroke="#e0282c" stroke-width="2.1" stroke-linecap="round"/></svg>
<span style="left:58.6px;top:148px;font-size:7px;line-height:7px;color:#2a1c24;-webkit-text-stroke:0.22px #2a1c24;letter-spacing:-0.128px;">Find In Files Window</span>
<svg style="left:43.2px;top:146.70px" width="10" height="10" viewBox="0 0 10 10"><rect x="1" y="1.5" width="8.4" height="6.6" fill="#eef2fa" stroke="#5070b0" stroke-width="0.7"/><rect x="1" y="1.5" width="8.4" height="1.5" fill="#3a66c0"/><path d="M4 8.8 L6 6.4 L7 7.6 L8.4 5.6 L9.4 8.8 Z" fill="#223"/></svg>
<div style="left:42.5px;top:162.8px;width:11.4px;height:11.5px;background:#ffd27a;border:0.7px solid #f2a94a;border-radius:1.3px;box-sizing:border-box"></div>
<span style="left:58.6px;top:165px;font-size:7px;line-height:7px;color:#2a1c24;-webkit-text-stroke:0.22px #2a1c24;letter-spacing:-0.167px;">Command Window</span>
<svg style="left:43.2px;top:163.70px" width="10" height="10" viewBox="0 0 10 10"><rect x="1" y="1.8" width="8.2" height="6.6" fill="#f4f7ff" stroke="#4a6ab0" stroke-width="0.7"/><rect x="1" y="1.8" width="8.2" height="1.5" fill="#3a66c0"/><path d="M2.2 4.6 L3.6 5.6 L2.2 6.6" stroke="#223" stroke-width="0.6" fill="none"/></svg>
<div style="left:42.5px;top:175.8px;width:11.4px;height:11.5px;background:#ffd27a;border:0.7px solid #f2a94a;border-radius:1.3px;box-sizing:border-box"></div>
<span style="left:58.6px;top:178px;font-size:7px;line-height:7px;color:#2a1c24;-webkit-text-stroke:0.22px #2a1c24;letter-spacing:-0.229px;">Disassembly Window</span>
<svg style="left:43.2px;top:176.70px" width="10" height="10" viewBox="0 0 10 10"><rect x="1" y="1.2" width="7.4" height="7.6" fill="#d8dde6" stroke="#70809a" stroke-width="0.6"/><circle cx="4.8" cy="4.8" r="2.7" fill="#eef4f8" stroke="#3a4656" stroke-width="1"/><path d="M6.8 6.8 L9.2 9.2" stroke="#3a4656" stroke-width="1.3"/></svg>
<span style="left:58.6px;top:190px;font-size:7px;line-height:7px;color:#2a1c24;-webkit-text-stroke:0.22px #2a1c24;letter-spacing:-0.192px;">Symbols Window</span>
<svg style="left:43.2px;top:188.70px" width="10" height="10" viewBox="0 0 10 10"><rect x="0.8" y="1.4" width="7.6" height="6.2" fill="#f2f5fb" stroke="#5a7ac8" stroke-width="0.5"/><rect x="0.8" y="1.4" width="7.6" height="1.5" fill="#4a78d8"/><rect x="3.4" y="3.8" width="5.8" height="5.6" fill="#1c2cb8"/><text x="4.3" y="9" font-size="6" font-weight="bold" font-family="Liberation Sans, sans-serif" fill="#f4e020">S</text></svg>
<div style="left:42.5px;top:200.8px;width:11.4px;height:11.5px;background:#ffd27a;border:0.7px solid #f2a94a;border-radius:1.3px;box-sizing:border-box"></div>
<span style="left:58.6px;top:203px;font-size:7px;line-height:7px;color:#2a1c24;-webkit-text-stroke:0.22px #2a1c24;letter-spacing:-0.163px;">Registers Window</span>
<svg style="left:43.2px;top:201.70px" width="10" height="10" viewBox="0 0 10 10"><rect x="1.2" y="1.6" width="7.8" height="7" fill="#8a8f86"/><path d="M1.2 3.6 H9 M1.2 5.4 H9 M1.2 7.2 H9" stroke="#4a4f48" stroke-width="0.7"/></svg>
<div style="left:42.5px;top:213.8px;width:11.4px;height:11.5px;background:#ffd27a;border:0.7px solid #f2a94a;border-radius:1.3px;box-sizing:border-box"></div>
<span style="left:58.6px;top:216px;font-size:7px;line-height:7px;color:#2a1c24;-webkit-text-stroke:0.22px #2a1c24;letter-spacing:-0.197px;">Call Stack Window</span>
<svg style="left:43.2px;top:214.70px" width="10" height="10" viewBox="0 0 10 10"><rect x="1" y="1.4" width="5.4" height="4.4" fill="#f4f6fa" stroke="#6a80a8" stroke-width="0.6"/><rect x="3.6" y="4" width="5.6" height="4.6" fill="#fff" stroke="#6a80a8" stroke-width="0.6"/><path d="M1.6 6.2 C1.6 8.2 2.6 8.6 4 8.2" stroke="#4a70c0" stroke-width="0.8" fill="none"/></svg>
<span style="left:58.6px;top:228px;font-size:7px;line-height:7px;color:#2a1c24;-webkit-text-stroke:0.22px #2a1c24;letter-spacing:-0.117px;">Watch Windows</span>
<svg style="left:154px;top:229.50px" width="3" height="4" viewBox="0 0 3 4"><path d="M0 0 L2.6 2 L0 4 Z" fill="#111"/></svg>
<span style="left:58.6px;top:241px;font-size:7px;line-height:7px;color:#2a1c24;-webkit-text-stroke:0.22px #2a1c24;letter-spacing:-0.187px;">Memory Windows</span>
<svg style="left:154px;top:242.50px" width="3" height="4" viewBox="0 0 3 4"><path d="M0 0 L2.6 2 L0 4 Z" fill="#111"/></svg>
<div style="left:41.4px;top:251.2px;width:117px;height:12.9px;background:linear-gradient(#fff3cf 0%,#ffe08c 45%,#ffc94a 50%,#ffd772 100%);border:0.6px solid #e5c365;border-radius:1.5px;box-sizing:border-box"></div>
<span style="left:58.6px;top:254px;font-size:7px;line-height:7px;color:#2a1c24;-webkit-text-stroke:0.22px #2a1c24;letter-spacing:-0.174px;">Serial Windows</span>
<svg style="left:154px;top:255.50px" width="3" height="4" viewBox="0 0 3 4"><path d="M0 0 L2.6 2 L0 4 Z" fill="#111"/></svg>
<span style="left:58.6px;top:266px;font-size:7px;line-height:7px;color:#2a1c24;-webkit-text-stroke:0.22px #2a1c24;letter-spacing:-0.213px;">Analysis Windows</span>
<svg style="left:154px;top:267.50px" width="3" height="4" viewBox="0 0 3 4"><path d="M0 0 L2.6 2 L0 4 Z" fill="#111"/></svg>
<span style="left:58.6px;top:279px;font-size:7px;line-height:7px;color:#2a1c24;-webkit-text-stroke:0.22px #2a1c24;letter-spacing:-0.647px;">Trace</span>
<svg style="left:154px;top:280.50px" width="3" height="4" viewBox="0 0 3 4"><path d="M0 0 L2.6 2 L0 4 Z" fill="#111"/></svg>
<span style="left:58.6px;top:292px;font-size:7px;line-height:7px;color:#2a1c24;-webkit-text-stroke:0.22px #2a1c24;letter-spacing:-0.396px;">System Viewer</span>
<svg style="left:154px;top:293.50px" width="3" height="4" viewBox="0 0 3 4"><path d="M0 0 L2.6 2 L0 4 Z" fill="#111"/></svg>
<span style="left:58.6px;top:304px;font-size:7px;line-height:7px;color:#2a1c24;-webkit-text-stroke:0.22px #2a1c24;letter-spacing:-0.041px;">Toolbox Window</span>
<svg style="left:43.2px;top:302.70px" width="10" height="10" viewBox="0 0 10 10"><path d="M1.8 8.6 L6.6 3.2" stroke="#d03030" stroke-width="1.4"/><path d="M8.4 8.6 L3.8 3.4" stroke="#7a8a9a" stroke-width="1"/><path d="M1.4 3.4 L4.4 1.6 M5.6 1.8 L8.8 3.6" stroke="#6a8098" stroke-width="1.2"/></svg>
<div style="left:42.5px;top:318.8px;width:11.4px;height:11.5px;background:#ffd27a;border:0.7px solid #f2a94a;border-radius:1.3px;box-sizing:border-box"></div>
<span style="left:58.6px;top:321px;font-size:7px;line-height:7px;color:#2a1c24;-webkit-text-stroke:0.22px #2a1c24;letter-spacing:-0.129px;">Periodic Window Update</span>
<svg style="left:43.2px;top:319.70px" width="10" height="10" viewBox="0 0 10 10"><path d="M2.2 5 L4 7.3 L7 2.2" stroke="#1a1a3a" stroke-width="1.3" fill="none"/></svg>
<div style="left:159.6px;top:249.9px;width:110px;height:53.3px;background:#f1f1f1;border:0.7px solid #bcbcbc;box-sizing:border-box;box-shadow:1.2px 1.2px 2px rgba(0,0,0,0.7)"></div>
<svg style="left:163.2px;top:253.60px" width="9" height="8.4" viewBox="0 0 9 8.4"><rect x="0.3" y="0.3" width="7.8" height="7.2" fill="#d4dae6" stroke="#5a78b8" stroke-width="0.6"/><rect x="0.3" y="0.3" width="7.8" height="1.7" fill="#3f74d8"/><rect x="1.2" y="2.8" width="3.6" height="2.8" fill="#fff"/><path d="M1.8 3.6 H4.2 M1.8 4.8 H3.6" stroke="#556" stroke-width="0.5"/><path d="M3.4 7.6 L8 4.4" stroke="#222" stroke-width="1.1"/><path d="M7 5.2 L8.6 4" stroke="#c02020" stroke-width="1"/></svg>
<span style="left:177.7px;top:254px;font-size:7px;line-height:7px;color:#2a1c24;-webkit-text-stroke:0.22px #2a1c24;letter-spacing:-0.605px;">UART #1</span>
<svg style="left:163.2px;top:266.20px" width="9" height="8.4" viewBox="0 0 9 8.4"><rect x="0.3" y="0.3" width="7.8" height="7.2" fill="#d4dae6" stroke="#5a78b8" stroke-width="0.6"/><rect x="0.3" y="0.3" width="7.8" height="1.7" fill="#3f74d8"/><rect x="1.2" y="2.8" width="3.6" height="2.8" fill="#fff"/><path d="M1.8 3.6 H4.2 M1.8 4.8 H3.6" stroke="#556" stroke-width="0.5"/><path d="M3.4 7.6 L8 4.4" stroke="#222" stroke-width="1.1"/><path d="M7 5.2 L8.6 4" stroke="#c02020" stroke-width="1"/></svg>
<span style="left:177.7px;top:267px;font-size:7px;line-height:7px;color:#2a1c24;-webkit-text-stroke:0.22px #2a1c24;letter-spacing:-0.605px;">UART #2</span>
<svg style="left:163.2px;top:278.80px" width="9" height="8.4" viewBox="0 0 9 8.4"><rect x="0.3" y="0.3" width="7.8" height="7.2" fill="#d4dae6" stroke="#5a78b8" stroke-width="0.6"/><rect x="0.3" y="0.3" width="7.8" height="1.7" fill="#3f74d8"/><rect x="1.2" y="2.8" width="3.6" height="2.8" fill="#fff"/><path d="M1.8 3.6 H4.2 M1.8 4.8 H3.6" stroke="#556" stroke-width="0.5"/><path d="M3.4 7.6 L8 4.4" stroke="#222" stroke-width="1.1"/><path d="M7 5.2 L8.6 4" stroke="#c02020" stroke-width="1"/></svg>
<span style="left:177.7px;top:279px;font-size:7px;line-height:7px;color:#2a1c24;-webkit-text-stroke:0.22px #2a1c24;letter-spacing:-0.605px;">UART #3</span>
<div style="left:160.4px;top:289.6px;width:108.8px;height:12.4px;background:linear-gradient(#fff3cf 0%,#ffe08c 45%,#ffc94a 50%,#ffd772 100%);border:0.6px solid #e5c365;border-radius:1.5px;box-sizing:border-box"></div>
<svg style="left:163.2px;top:291.60px" width="9" height="8.4" viewBox="0 0 9 8.4"><rect x="0.3" y="0.3" width="7.8" height="7.2" fill="#d4dae6" stroke="#5a78b8" stroke-width="0.6"/><rect x="0.3" y="0.3" width="7.8" height="1.7" fill="#3f74d8"/><rect x="1.2" y="2.8" width="3.6" height="2.8" fill="#fff"/><path d="M1.8 3.6 H4.2 M1.8 4.8 H3.6" stroke="#556" stroke-width="0.5"/><path d="M3.4 7.6 L8 4.4" stroke="#222" stroke-width="1.1"/><path d="M7 5.2 L8.6 4" stroke="#c02020" stroke-width="1"/></svg>
<span style="left:177.7px;top:292px;font-size:7px;line-height:7px;color:#2a1c24;-webkit-text-stroke:0.22px #2a1c24;letter-spacing:-0.105px;">Debug (printf) Viewer</span>
<svg style="left:0;top:0" width="750" height="429" viewBox="0 0 750 429" fill="none" stroke="#000" stroke-linecap="round" stroke-linejoin="round"><path d="M41.8 10.8 C43 9 44.6 8.2 46.3 7.7 C49 6.9 52 6.6 54.5 6.7 C57 6.8 59.2 7.1 61 7.7 C62.8 8.4 64.2 9 65 9.8 C66.2 10.8 66.8 11.8 67.1 13 C67.5 14.4 67.7 15.6 67.7 16.7 C68.6 16.6 69.4 17 70 17.5 C68.6 17.6 67.6 18.4 67.1 19.6 C66.6 21.2 66 22.4 65 23.7 C64 25.2 62.6 26.6 61 27.7 C59 29.2 57 30 54.5 30.6 C52.4 31.2 50 31.5 48 31.4 C46.2 31.3 44.8 31 43.5 30.2 C42.2 29.2 41.5 27.8 41 26.1 C40.4 24.2 40.1 22.4 40 20.4 C39.9 18.4 40 16.6 40.2 14.7 C40.4 13 41 11.8 41.8 10.6" stroke-width="2.4"/><path d="M62.8 264.4 C58 264.6 54 263 51.4 259.2 C50.2 257.4 50 255 51.4 252.8 C54 251.6 58 251.6 64 251.4 C70 250.8 76 250.4 82 250.2 C88 249.8 93 249.5 97.6 249.6 C101.6 249.8 104.6 250.2 107.2 251.4 C109.6 252.4 111 253.8 111 255.6 C111.2 257.6 110.8 259.2 109.6 260.4 C108 262 105.6 262.6 102.4 263 C98 263.6 93 264 88 264 C83 264.2 78 264 73.6 264 C69 264.2 66 264.4 62.8 264.6 M52 260 C54 262 56 263.4 58 264.6 C60 266 62 267.6 64 268.8" stroke-width="1.9"/><path d="M158.4 295 C158.8 293 160.6 291.6 163.9 291 C170 290.4 177 290.4 184.7 290.3 C196 290.1 208 290 219.3 290 C228 290 236 290 243.6 290.3 C246.4 290.6 248.2 291 249.4 292 C250.8 293.2 251.3 294.4 251.2 295.6 C251 297.4 250.4 298.6 249 299.6 C246 301.4 243 302 239.6 302.2 C233 303 228 303.2 222 303.4 C214 303.8 206 303.8 198 303.8 C189 303.6 180 303.2 170.8 302.6 C166 302.2 162 301.6 159.8 300.2 C158.4 298.8 158 297 158.4 295" stroke-width="1.9"/></svg>
</body></html>
